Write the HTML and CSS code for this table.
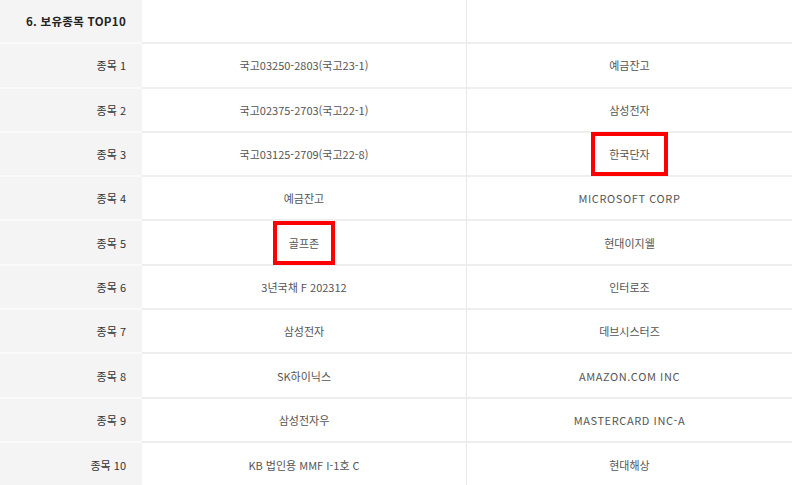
FILE: index.html
```html
<!DOCTYPE html>
<html lang="ko">
<head>
<meta charset="utf-8">
<link rel="stylesheet" href="styles.css">
</head>
<body>
<table class="top10">
  <colgroup>
    <col class="c-label">
    <col class="c-val">
    <col class="c-val">
  </colgroup>
  <tbody>
    <tr class="head">
      <th class="label">6. 보유종목 TOP10</th>
      <td class="val"></td>
      <td class="val last"></td>
    </tr>
    <tr><th class="label name">종목 1</th><td class="val">국고03250-2803(국고23-1)</td><td class="val last">예금잔고</td></tr>
    <tr><th class="label name">종목 2</th><td class="val">국고02375-2703(국고22-1)</td><td class="val last">삼성전자</td></tr>
    <tr><th class="label name">종목 3</th><td class="val">국고03125-2709(국고22-8)</td><td class="val last"><span class="mark mark-a">한국단자</span></td></tr>
    <tr><th class="label name">종목 4</th><td class="val">예금잔고</td><td class="val last latin">MICROSOFT CORP</td></tr>
    <tr><th class="label name">종목 5</th><td class="val"><span class="mark mark-b">골프존</span></td><td class="val last">현대이지웰</td></tr>
    <tr><th class="label name">종목 6</th><td class="val">3년국채 F 202312</td><td class="val last">인터로조</td></tr>
    <tr><th class="label name">종목 7</th><td class="val">삼성전자</td><td class="val last">데브시스터즈</td></tr>
    <tr><th class="label name">종목 8</th><td class="val">SK하이닉스</td><td class="val last latin">AMAZON.COM INC</td></tr>
    <tr><th class="label name">종목 9</th><td class="val">삼성전자우</td><td class="val last latin">MASTERCARD INC-A</td></tr>
    <tr class="end"><th class="label name">종목 10</th><td class="val">KB 법인용 MMF I-1호 C</td><td class="val last">현대해상</td></tr>
  </tbody>
</table>
</body>
</html>
```
FILE: styles.css
```css
html, body {
  margin: 0;
  padding: 0;
  background: #ffffff;
}
body {
  font-family: "Noto Sans CJK KR", "Noto Sans", sans-serif;
  font-size: 11px;
  color: #555555;
}
.top10 {
  width: 792px;
  border-collapse: separate;
  border-spacing: 0;
  table-layout: fixed;
}
.c-label { width: 142px; }
.c-val { width: 325px; }
.top10 tr { height: 44.3px; }
.top10 th,
.top10 td {
  padding: 0;
  box-sizing: border-box;
  border-bottom: 2px solid #eeeeee;
  vertical-align: middle;
  line-height: 14px;
}
.top10 tr.end th,
.top10 tr.end td {
  border-bottom: none;
}
.label {
  background: #f4f4f4;
  text-align: right;
  padding-right: 16px !important;
  border-bottom-color: #fafafa !important;
  font-weight: normal;
  color: #333333;
}
.head .label {
  font-weight: bold;
  font-size: 11.5px;
  letter-spacing: 0.3px;
  color: #222222;
}
.val {
  text-align: center;
  border-right: 1px solid #e8e8e8;
}
.val.last {
  border-right: none;
}
.latin {
  letter-spacing: 0.6px;
}
.mark {
  display: inline-block;
  box-sizing: border-box;
  height: 44px;
  margin: -1px 0;
  line-height: 36px;
  border: 4px solid #ff0000;
  vertical-align: middle;
}
.mark-a { padding: 0 14px; }
.mark-b { padding: 0 12px; }
```
